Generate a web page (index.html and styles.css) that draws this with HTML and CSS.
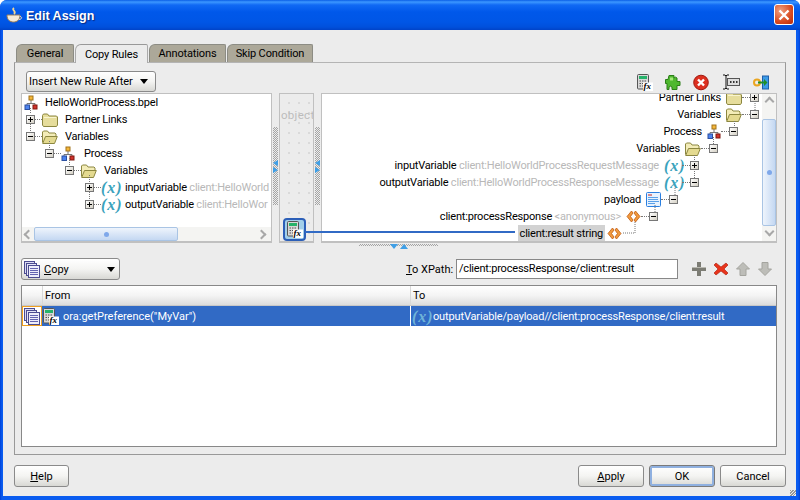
FILE: index.html
```html
<!DOCTYPE html>
<html lang="en">
<head>
<meta charset="utf-8">
<title>Edit Assign</title>
<link rel="stylesheet" href="styles.css">
</head>
<body>
<svg class="defs" aria-hidden="true">
  <symbol id="folder" viewBox="0 0 16 14"><path d="M.5 12V2.500l1-1.500h4l1.500 2h7.500l1 1V12l-1 1.500H1.500z" fill="#e6dd9c" stroke="#8c8740"/><path d="M2 4h12v1H2z" fill="#f8f4cf"/></symbol>
  <symbol id="folderopen" viewBox="0 0 16 14"><path d="M.5 12.500V2l1-1h4l1.500 2h6l1 1v2" fill="#f3ecb8" stroke="#8c8740"/><path d="M.7 13.500 3.500 6.500h11.800l-2.800 7z" fill="#e4da90" stroke="#8c8740"/></symbol>
  <symbol id="process" viewBox="0 0 14 15"><path d="M7 5v3M3 11V8.500h8V11" fill="none" stroke="#777"/><rect x="5" y="1" width="4" height="4" fill="#f4b73a" stroke="#a2731a"/><rect x="1" y="10" width="4.500" height="4.500" fill="#4d83ee" stroke="#2c50a0"/><rect x="9" y="10" width="4" height="4" fill="#d0332c" stroke="#801810"/></symbol>
  <symbol id="calc" viewBox="0 0 16 17"><rect x=".5" y=".5" width="11" height="14.500" rx="1" fill="#d8d8d8" stroke="#555"/><rect x="2" y="2" width="8" height="3" fill="#26b36a"/><path d="M2.500 7h1.500M5 7h1.500M7.500 7h1.500M2.500 9.500h1.500M5 9.500h1.500M7.500 9.500h1.500M2.500 12h1.500M5 12h1.500" stroke="#555"/><rect x="6" y="8.500" width="10" height="8.500" fill="#fff"/><text class="fx" x="6.500" y="15">fx</text></symbol>
  <symbol id="puzzle" viewBox="0 0 16 16"><path d="M4 1h5v2.500a2 2 0 0 1 3 0V7h3v4h-3v4H7v-2.500a2 2 0 0 0-3 0V15H2V9H.5V5H3z" fill="#4fb82f" stroke="#2c7f18"/><path d="M5 3h3v3H5z" fill="#a5e67a"/></symbol>
  <symbol id="stop" viewBox="0 0 16 16"><circle cx="8" cy="8" r="7.300" fill="#dd3020" stroke="#a01a10"/><path d="M5 5l6 6M11 5l-6 6" stroke="#fff" stroke-width="2.400"/></symbol>
  <symbol id="ibeam" viewBox="0 0 18 16"><rect x="5.500" y="4.500" width="12" height="7" fill="#ddd" stroke="#555"/><path d="M8 8h1.500M11 8h1.500M14 8h1.500" stroke="#333" stroke-width="2"/><path d="M1 1h2l1 1 1-1h2M4 2v12M1 15h2l1-1 1 1h2" fill="none" stroke="#111"/></symbol>
  <symbol id="bind" viewBox="0 0 16 14"><rect x="9.500" y=".5" width="6" height="13" fill="#3d9be8" stroke="#1e5fa8"/><circle cx="4" cy="7" r="3" fill="none" stroke="#eaa520" stroke-width="2"/><path d="M5 6h6V3.500L14.500 7 11 10.500V8H5z" fill="#1f8f2a"/></symbol>
  <symbol id="copy" viewBox="0 0 16 17"><rect x=".5" y=".5" width="10" height="12" fill="#dcdcf2" stroke="#4c4c90"/><rect x="2.500" y="2.500" width="10" height="12" fill="#e5e5f6" stroke="#4c4c90"/><rect x="4.500" y="4.500" width="11" height="12" fill="#eeeefa" stroke="#4c4c90"/><path d="M6 7.500h8M6 9.500h8M6 11.500h8M6 13.500h8" stroke="#6464b0"/></symbol>
  <symbol id="doc" viewBox="0 0 15 15"><rect x=".5" y=".5" width="14" height="14" rx="1" fill="#e6f2ff" stroke="#2a7fe0"/><path d="M2 3h4" stroke="#c02020"/><path d="M2 5.500h10M2 7.500h10M2 9.500h11M2 11.500h7" stroke="#5aa0e8"/></symbol>
  <symbol id="elem" viewBox="0 0 15 13"><path d="M5.500 1 1 6.500 5.500 12l1.500-2L4.500 6.500 7 3zM9.500 1 14 6.500 9.500 12 8 10l2.500-3.500L8 3z" fill="#f09a3e" stroke="#c25a10" stroke-width=".8"/></symbol>
  <symbol id="plus" viewBox="0 0 14 14"><path d="M5 0h4v5h5v4H9v5H5V9H0V5h5z" fill="#7c7c74"/><path d="M5 5h4v1H5zM0 5h14v1H0z" fill="#b8b8b0"/></symbol>
  <symbol id="cross" viewBox="0 0 14 14"><path d="M2 1l5 4 5-4 2 2-4 4 4 4-2 2-5-4-5 4-2-2 4-4-4-4z" fill="#e8341c" stroke="#a81a08" stroke-width=".6"/></symbol>
  <symbol id="up" viewBox="0 0 14 14"><path d="M7 .5 13.500 7H10v6.500H4V7H.5z" fill="#bdbdb8" stroke="#a4a49e"/></symbol>
  <symbol id="down" viewBox="0 0 14 14"><path d="M7 13.500 13.500 7H10V.5H4V7H.5z" fill="#bdbdb8" stroke="#a4a49e"/></symbol>
  <symbol id="cup" viewBox="0 0 17 17"><path d="M1 8h13c0 5-3 7-6.500 7S1 13 1 8z" fill="#f4ead8" stroke="#9a7d5a"/><path d="M8 1c-3 2 3 3 0 6" fill="none" stroke="#f4d890" stroke-width="1.800"/><path d="M14 9.500c2.500 0 2 3-1 3" fill="none" stroke="#e8d8b8"/></symbol>
</svg>

<div class="window">
  <header class="titlebar">
    <svg class="ic-cup"><use href="#cup"/></svg>
    <span class="title">Edit Assign</span>
    <button class="close" aria-label="Close"><svg viewBox="0 0 12 12"><path d="M1.500 1.500l9 9M10.500 1.500l-9 9" stroke="#fff" stroke-width="2.400"/></svg></button>
  </header>

  <main class="content">
    <nav class="tabs">
      <div class="tab tab-general">General</div>
      <div class="tab tab-copy active">Copy Rules</div>
      <div class="tab tab-annot">Annotations</div>
      <div class="tab tab-skip">Skip Condition</div>
    </nav>

    <section class="panel">
      <div class="toolbar">
        <button class="btn combo insert"><span>Insert New Rule After</span><i class="caret"></i></button>
        <div class="tools">
          <svg class="i16"><use href="#calc"/></svg>
          <svg class="i16"><use href="#puzzle"/></svg>
          <svg class="i16"><use href="#stop"/></svg>
          <svg class="i18"><use href="#ibeam"/></svg>
          <svg class="i16"><use href="#bind"/></svg>
        </div>
      </div>

      <div class="mapper">
        <div class="pane left-pane">
          <div class="tree">
            <div class="row root"><svg class="i-proc"><use href="#process"/></svg><span>HelloWorldProcess.bpel</span></div>
            <div class="row l0"><b class="exp plus"></b><i class="dash"></i><svg class="i-folder"><use href="#folder"/></svg><span>Partner Links</span></div>
            <div class="row l0"><b class="exp"></b><i class="dash"></i><svg class="i-folder"><use href="#folderopen"/></svg><span>Variables</span></div>
            <div class="row l1"><b class="exp"></b><i class="dash"></i><svg class="i-proc"><use href="#process"/></svg><span>Process</span></div>
            <div class="row l2"><b class="exp"></b><i class="dash"></i><svg class="i-folder"><use href="#folderopen"/></svg><span>Variables</span></div>
            <div class="row l3"><b class="exp plus"></b><i class="dash"></i><em class="var">(x)</em><span>inputVariable <u class="type">client:HelloWorld</u></span></div>
            <div class="row l3"><b class="exp plus"></b><i class="dash"></i><em class="var">(x)</em><span>outputVariable <u class="type">client:HelloWor</u></span></div>
          </div>
          <svg class="guides"><path d="M8.500 14v6M8.500 30v7M27.500 47v7M47.500 64v7M67.500 81v7M67.500 98v7"/></svg>
          <div class="hscroll">
            <i class="arrow-l"></i>
            <div class="hthumb"><i class="grip"></i></div>
            <i class="arrow-r"></i>
          </div>
        </div>

        <div class="splitter"><div class="dots"><i class="tri-l"></i><i class="tri-r"></i></div></div>

        <div class="pane middle-pane">
          <span class="object">object</span>
          <div class="connect"><svg class="i16"><use href="#calc"/></svg></div>
        </div>

        <div class="splitter"><div class="dots"><i class="tri-l"></i><i class="tri-r"></i></div></div>

        <div class="pane right-pane">
          <div class="tree rtree">
            <div class="row r0"><span>Partner Links</span><svg class="i-folder"><use href="#folder"/></svg><i class="dash"></i><b class="exp plus"></b></div>
            <div class="row r0"><span>Variables</span><svg class="i-folder"><use href="#folderopen"/></svg><i class="dash"></i><b class="exp"></b></div>
            <div class="row r1"><span>Process</span><svg class="i-proc"><use href="#process"/></svg><i class="dash"></i><b class="exp"></b></div>
            <div class="row r2"><span>Variables</span><svg class="i-folder"><use href="#folderopen"/></svg><i class="dash"></i><b class="exp"></b></div>
            <div class="row r3"><span>inputVariable <u class="type">client:HelloWorldProcessRequestMessage</u></span><em class="var">(x)</em><i class="dash"></i><b class="exp plus"></b></div>
            <div class="row r3"><span>outputVariable <u class="type">client:HelloWorldProcessResponseMessage</u></span><em class="var">(x)</em><i class="dash"></i><b class="exp"></b></div>
            <div class="row r4"><span>payload</span><svg class="i-doc"><use href="#doc"/></svg><i class="dash"></i><b class="exp"></b></div>
            <div class="row r5"><span>client:processResponse <u class="type">&lt;anonymous&gt;</u></span><svg class="i-elem"><use href="#elem"/></svg><i class="dash"></i><b class="exp"></b></div>
            <div class="row r6"><span class="picked">client:result string</span><svg class="i-elem"><use href="#elem"/></svg></div>
          </div>
          <svg class="guides rguides"><path d="M433 9v8M412.500 27v7M391.500 43v8M372.500 61v7M372.500 77v8M353 94v8M333 111v8M313 128v11H300"/></svg>
          <div class="vscroll">
            <i class="arrow-u"></i>
            <div class="vthumb"><i class="grip"></i></div>
            <i class="arrow-d"></i>
          </div>
        </div>
        <i class="link"></i>
      </div>

      <div class="hsplit"><i class="tri-d"></i><i class="tri-u"></i></div>

      <div class="rulebar">
        <button class="btn combo copy-btn"><svg class="i16"><use href="#copy"/></svg><span><u>C</u>opy</span><i class="caret"></i></button>
        <label class="xpath-label"><u>T</u>o XPath:</label>
        <div class="xpath">/client:processResponse/client:result</div>
        <div class="rule-tools">
          <svg class="i14"><use href="#plus"/></svg>
          <svg class="i14"><use href="#cross"/></svg>
          <svg class="i14"><use href="#up"/></svg>
          <svg class="i14"><use href="#down"/></svg>
        </div>
      </div>

      <div class="table">
        <div class="thead">
          <div class="th"></div>
          <div class="th">From</div>
          <div class="th">To</div>
        </div>
        <div class="tr">
          <div class="td marker"><svg class="i16"><use href="#copy"/></svg></div>
          <div class="td sel"><svg class="i16"><use href="#calc"/></svg><span>ora:getPreference("MyVar")</span></div>
          <div class="td sel to"><em class="var var-sel">(x)</em><span class="to-path">outputVariable/payload//client:processResponse/client:result</span></div>
        </div>
      </div>
    </section>

    <footer class="footer">
      <button class="btn foot help"><u>H</u>elp</button>
      <div class="foot-right">
        <button class="btn foot apply"><u>A</u>pply</button>
        <button class="btn foot ok">OK</button>
        <button class="btn foot cancel">Cancel</button>
      </div>
    </footer>
    <i class="grip-corner"></i>
  </main>
</div>
</body>
</html>
```
FILE: styles.css
```css
* { box-sizing: border-box; }
html, body { margin: 0; padding: 0; background: #fff; }
body { width: 800px; height: 500px; overflow: hidden; font: 11px Roboto, "Liberation Sans", sans-serif; color: #000; }
.defs { position: absolute; width: 0; height: 0; }
svg { display: block; flex: none; }
u { text-decoration: underline; }
.type { text-decoration: none; color: #b8b8b8; }
.fx { font: italic bold 9px "Liberation Serif", serif; fill: #000; }

.window { width: 800px; height: 500px; display: flex; flex-direction: column; padding: 0 4px 4px 3px; border-radius: 7px 7px 0 0; overflow: hidden; background: linear-gradient(90deg, #0041d8, #0a5cf0 2px, #0a5cf0 calc(100% - 2px), #0041d8); }
.titlebar { height: 30px; margin: 0 -4px 0 -3px; padding: 2px 6px 0; flex: none; display: flex; align-items: center; background: linear-gradient(180deg, #0a5ee6 0, #3c97ff 2px, #1069f4 5px, #0058ea 12px, #0056e6 22px, #0050dc 27px, #0043c8 30px); }
.ic-cup { width: 17px; height: 17px; margin-top: -2px; }
.title { margin-left: 3px; font: bold 12.500px "Liberation Sans", sans-serif; color: #fff; text-shadow: 1px 1px 1px #0a2a80; }
.close { margin: -3px 0 0 auto; width: 20px; height: 21px; padding: 3px; border: 1px solid #fff; border-radius: 3px; background: radial-gradient(circle at 30% 30%, #f0a080, #d84a20 60%, #b82a08); }
.close svg { width: 12px; height: 12px; }

.content { flex: 1; position: relative; background: #ececec; padding: 14px 10px 0 11px; display: flex; flex-direction: column; }

.tabs { display: flex; height: 18px; padding-left: 2px; gap: 1px; position: relative; z-index: 1; letter-spacing: -.15px; }
.tab { display: flex; align-items: center; justify-content: center; height: 18px; background: #aca899; border: 1px solid #8c8c84; border-bottom: 0; border-radius: 6px 2px 0 0; white-space: nowrap; }
.tab.active { height: 19px; background: #ececec; border-color: #aaa; border-top-color: #999; }
.tab-general { width: 58px; }
.tab-copy { width: 73px; }
.tab-annot { width: 77px; }
.tab-skip { width: 86px; }

.panel { height: 393px; border: 1px solid #999; border-top-color: #b4b4b4; padding: 6px 8px 0 6px; display: flex; flex-direction: column; }

.btn { font: inherit; color: #000; border: 1px solid #8a8a8a; border-radius: 3px; background: linear-gradient(180deg, #fff, #f4f4f2 50%, #d8d8d4); padding: 0; }
.combo { display: flex; align-items: center; height: 21px; }
.caret { margin-left: auto; width: 0; height: 0; border: 4.500px solid transparent; border-top: 5px solid #000; border-bottom: 0; }

.toolbar { display: flex; justify-content: space-between; align-items: center; height: 24px; flex: none; padding-left: 5px; }
.insert { width: 130px; padding: 0 7px 0 2px; white-space: nowrap; }
.tools { display: flex; align-items: center; margin-right: 8px; gap: 13px; margin-top: 2px; }
.tools svg:nth-child(-n+2) { margin-right: -1px; }
.i16 { width: 16px; height: 17px; }
.i18 { width: 18px; height: 16px; }
.i14 { width: 14px; height: 14px; }

.mapper { display: flex; height: 150px; flex: none; position: relative; }
.pane { border: 2px solid #c0c0c0; border-width: 1px 1px 2px 1px; border-color: #c0c0c0; position: relative; overflow: hidden; }
.left-pane { width: 251px; background: #fff; display: flex; flex-direction: column; }
.middle-pane { width: 35px; background-color: #ececec; background-image: radial-gradient(circle, #c4c4c4 .6px, transparent .8px); background-size: 10px 10px; background-position: 4px 4px; }
.right-pane { width: 456px; background: #fff; display: flex; }

.splitter { width: 7px; flex: none; display: flex; align-items: flex-start; padding: 34px 0 0 1px; }
.splitter + .pane { flex: none; }
.dots { width: 5px; height: 78px; display: flex; flex-direction: column; justify-content: center; gap: 1px; background-image: conic-gradient(#a4a4a4 25%, transparent 0 50%, #a4a4a4 0 75%, transparent 0); background-size: 2px 2px; }
.tri-l, .tri-r { width: 0; height: 0; border: 3.500px solid transparent; }
.tri-l { border-left: 0; border-right: 5px solid #3f9fe6; }
.tri-r { border-right: 0; border-left: 5px solid #3f9fe6; }

.tree { flex: 1; min-width: 0; overflow: hidden; letter-spacing: -.2px; }
.row { height: 17px; display: flex; align-items: center; white-space: nowrap; }
.exp { flex: none; width: 9px; height: 9px; border: 1px solid #777; background: linear-gradient(135deg, #fff, #d4d0c4); position: relative; }
.exp::before { content: ""; position: absolute; left: 1px; top: 3px; width: 5px; height: 1px; background: #000; }
.exp.plus::after { content: ""; position: absolute; left: 3px; top: 1px; width: 1px; height: 5px; background: #000; }
.dash { flex: none; width: 7px; border-top: 1px dotted #777; }
.i-folder { width: 16px; height: 14px; }
.i-proc { width: 14px; height: 15px; }
.i-doc { width: 15px; height: 15px; }
.i-elem { width: 15px; height: 13px; }
.var { flex: none; width: 18px; font: italic bold 16px/17px "Liberation Serif", serif; letter-spacing: 1px; color: #3aa2bc; text-align: left; white-space: nowrap; }

.left-pane .row svg, .left-pane .row .var { margin-right: 7px; }
.root { padding-left: 2px; }
.root .i-proc { margin-right: 7px; }
.l0 { padding-left: 4px; }
.l1 { padding-left: 23px; }
.left-pane .l1 .i-proc { margin-right: 9px; }
.l2 { padding-left: 43px; }
.l3 { padding-left: 63px; }
.left-pane .l3 .var { margin-right: 6px; }

.rtree { margin-top: -5px; overflow: visible; }
.rtree .row { justify-content: flex-end; }
.rtree .row svg, .rtree .row .var { margin-left: 5px; }
.rtree .dash { width: 8px; }
.r0 { padding-right: 3px; }
.r1 { padding-right: 24px; }
.r2 { padding-right: 44px; }
.r3 { padding-right: 63px; }
.r4 { padding-right: 84px; }
.r5 { padding-right: 104px; }
.r6 { padding-right: 140px; }
.picked { background: #d2d2d2; height: 17px; line-height: 17px; padding: 0 2px; margin-right: -3px; }

.guides { position: absolute; left: 0; top: 0; width: 250px; height: 130px; pointer-events: none; }
.guides path, .rguides path { fill: none; stroke: #777; stroke-dasharray: 1 1; }
.rguides { width: 440px; height: 148px; }

.hscroll { height: 14px; flex: none; display: flex; align-items: stretch; background: #f4f4f2; position: relative; padding: 0 3px; }
.hthumb { width: 144px; margin-left: 2px; border: 1px solid #a9c4e4; border-radius: 2px; background: linear-gradient(180deg, #eef4fc, #c4d8f2); display: flex; align-items: center; justify-content: center; }
.grip { width: 5px; height: 5px; border-radius: 50%; background: #7fa8ea; }
.arrow-l, .arrow-r, .arrow-u, .arrow-d { width: 7px; height: 7px; border: solid #a8a8a8; border-width: 2px 0 0 2px; align-self: center; flex: none; }
.arrow-l { transform: rotate(-45deg); }
.arrow-r { transform: rotate(135deg); margin-left: auto; margin-right: 3px; }
.arrow-u { transform: rotate(45deg); margin: 4px auto 0; }
.arrow-d { transform: rotate(225deg); margin: 2px auto 0; }
.vscroll { width: 14px; flex: none; display: flex; flex-direction: column; background: #f4f4f2; position: relative; z-index: 1; }
.vthumb { margin-top: 14px; height: 107px; border: 1px solid #a9c4e4; border-radius: 2px; background: linear-gradient(90deg, #eef4fc, #c4d8f2); display: flex; align-items: center; justify-content: center; }

.object { display: block; margin-top: 13px; padding-left: 1px; color: #bcbcbc; font-size: 11.500px; line-height: 16px; white-space: nowrap; letter-spacing: .3px; }
.connect { position: absolute; left: 3px; bottom: 0; width: 23px; height: 23px; border: 2px solid #2c5fb8; border-radius: 4px; background: #a2cfea; display: flex; align-items: center; justify-content: center; }
.link { position: absolute; left: 284px; top: 138px; width: 210px; height: 2px; background: #316ac5; z-index: 2; }

.hsplit { height: 15px; flex: none; display: flex; justify-content: center; padding: 1px 0 0; gap: 2px; width: 79px; margin-left: 338px; background-image: conic-gradient(#a4a4a4 25%, transparent 0 50%, #a4a4a4 0 75%, transparent 0); background-size: 2px 2px; background-repeat: repeat-x; background-position: 0 1px; }
.tri-d, .tri-u { width: 0; height: 0; border: 4px solid transparent; }
.tri-d { border-top: 5px solid #3f9fe6; border-bottom: 0; }
.tri-u { border-bottom: 5px solid #3f9fe6; border-top: 0; }

.rulebar { display: flex; align-items: center; height: 22px; flex: none; }
.copy-btn { width: 99px; height: 22px; padding: 0 4px 0 2px; gap: 4px; flex: none; }
.xpath-label { margin-left: 286px; white-space: nowrap; flex: none; width: 46px; }
.xpath { margin-left: 4px; width: 222px; height: 20px; line-height: 18px; padding-left: 2px; background: #fff; border: 1px solid #888; white-space: nowrap; flex: none; letter-spacing: -.2px; }
.rule-tools { display: flex; gap: 8px; margin-left: 14px; }

.table { height: 162px; margin-top: 5px; flex: none; background: #fff; border: 1px solid #888; }
.thead, .tr { display: grid; grid-template-columns: 20px 368px 1fr; }
.thead { height: 20px; background: linear-gradient(180deg, #fff, #f4f4f4 50%, #dcdcdc); border-bottom: 1px solid #c8c8c8; }
.th { padding-left: 2px; line-height: 19px; border-left: 1px solid #d8d8d8; }
.th:first-child { border-left: 0; }
.tr { height: 20px; }
.td { display: flex; align-items: center; min-width: 0; }
.sel { background: #316ac5; color: #fff; gap: 4px; padding-left: 1px; }
.to { border-left: 1px solid #fff; padding-left: 1px; gap: 3px; }
.to-path { letter-spacing: -.15px; }
.marker { justify-content: center; border: 1px solid #f0a020; }
.var-sel { color: #6fb4d8; }

.footer { flex: 1; display: flex; justify-content: space-between; align-items: flex-start; padding-top: 10px; }
.foot { height: 22px; }
.help { width: 55px; }
.foot-right { display: flex; gap: 5px; }
.apply { width: 66px; }
.ok { width: 66px; border-color: #7a7a7a; box-shadow: inset 0 0 0 2px #8fb0e0; }
.cancel { width: 66px; }
.grip-corner { position: absolute; right: 0; bottom: 0; width: 6px; height: 6px; background: repeating-linear-gradient(135deg, #999 0 1px, transparent 1px 2px); }
```
